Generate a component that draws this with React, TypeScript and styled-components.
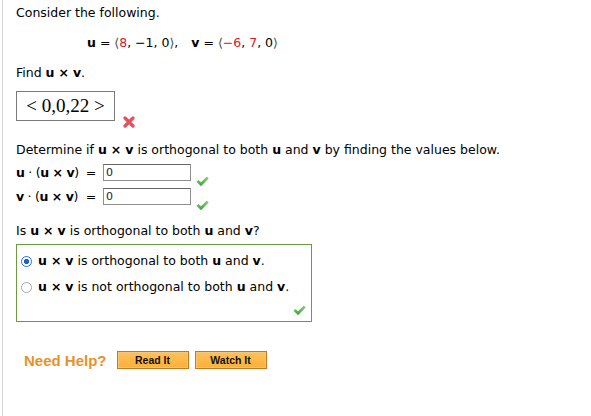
import React from "react";
import styled, { createGlobalStyle } from "styled-components";

const Global = createGlobalStyle`
  html, body { margin: 0; padding: 0; background: #fff; }
  body { font-family: "DejaVu Sans", Verdana, sans-serif; font-size: 12.5px; color: #000; }
`;

const Page = styled.div`
  width: 591px;
  height: 416px;
  box-sizing: border-box;
  border-left: 1px solid #d8d8d8;
  margin-left: 2px;
  padding: 5px 0 0 13px;
  display: flex;
  flex-direction: column;
`;

const Para = styled.div<{ $mt?: number }>`
  margin-top: ${(p) => p.$mt ?? 0}px;
  line-height: 16px;
  white-space: nowrap;
`;

const Eq = styled.div`
  margin-top: 14px;
  padding-left: 71px;
  line-height: 16px;
  white-space: nowrap;
  display: flex;
  gap: 13px;
`;

const Red = styled.span`
  color: #d0202a;
`;

const Ang = styled.span`
  color: #444;
`;

const AnswerRow = styled.div`
  margin-top: 10px;
  display: flex;
  align-items: flex-end;
  gap: 8px;
`;

const AnswerBox = styled.div`
  width: 97px;
  height: 28px;
  border: 1px solid #7a7a7a;
  box-sizing: content-box;
  font-family: "Liberation Serif", "Times New Roman", serif;
  font-size: 19px;
  display: flex;
  align-items: center;
  justify-content: center;
`;

const Icon = styled.span<{ $mb?: number }>`
  display: inline-flex;
  margin-bottom: ${(p) => p.$mb ?? 0}px;
`;

const CalcRow = styled.div<{ $mt: number }>`
  margin-top: ${(p) => p.$mt}px;
  display: flex;
  align-items: flex-start;
  line-height: 17px;
  white-space: nowrap;
`;

const CalcLabel = styled.span`
  flex: 0 0 87px;
  width: 87px;
  box-sizing: border-box;
  padding-right: 7px;
  display: flex;
  justify-content: space-between;
  letter-spacing: -0.3px;
`;

const Field = styled.div`
  flex: 0 0 auto;
  width: 84px;
  height: 15px;
  border: 1px solid #8e8e8e;
  border-top-color: #666;
  font-size: 11px;
  line-height: 15px;
  padding-left: 2px;
  color: #222;
`;

const CheckWrap = styled.span`
  display: inline-flex;
  margin: 12px 0 0 5px;
`;

const Choices = styled.div`
  margin-top: 5px;
  width: 290px;
  height: 68px;
  border: 1px solid #6f9a45;
  display: flex;
  flex-direction: column;
  padding: 8px 0 0 4px;
  box-sizing: content-box;
  position: relative;
`;

const Choice = styled.div<{ $mt?: number }>`
  display: flex;
  align-items: center;
  gap: 6px;
  line-height: 16px;
  margin-top: ${(p) => p.$mt ?? 0}px;
  white-space: nowrap;
`;

const Radio = styled.span<{ $on?: boolean }>`
  width: 11px;
  height: 11px;
  border-radius: 50%;
  box-sizing: border-box;
  border: 1px solid ${(p) => (p.$on ? "#2e6fd6" : "#a8a8a8")};
  background: ${(p) =>
    p.$on
      ? "radial-gradient(circle, #1e5fd0 0 2.4px, #fff 2.9px 100%)"
      : "#fff"};
`;

const BoxCheck = styled.span`
  position: absolute;
  right: 5px;
  bottom: 5px;
  display: inline-flex;
`;

const HelpRow = styled.div`
  margin-top: 29px;
  padding-left: 8px;
  display: flex;
  align-items: center;
`;

const HelpText = styled.span`
  font-family: "Liberation Sans", Arial, sans-serif;
  font-weight: bold;
  font-size: 15px;
  color: #e8912a;
  margin-right: 10px;
`;

const HelpButton = styled.button`
  width: 72px;
  height: 18px;
  margin-right: 6px;
  padding: 0;
  border: 1px solid #c27a22;
  box-shadow: inset 0 0 0 1px #f7c878;
  background: linear-gradient(#ffc15a, #fbb03a);
  font-family: "Liberation Sans", Arial, sans-serif;
  font-weight: bold;
  font-size: 10.5px;
  color: #111;
  display: flex;
  align-items: center;
  justify-content: center;
`;

const Check = () => (
  <svg width="13" height="11" viewBox="0 0 13 11">
    <defs>
      <linearGradient id="cg" x1="0" y1="0" x2="0" y2="1">
        <stop offset="0" stopColor="#8fd47e" />
        <stop offset="1" stopColor="#3f9a3c" />
      </linearGradient>
    </defs>
    <path d="M0.5 5.8 L2.6 3.9 L5 6.2 L10.8 0.5 L12.7 2.4 L5 10.3 Z" fill="url(#cg)" />
  </svg>
);

const Cross = () => (
  <svg width="12" height="12" viewBox="0 0 12 12">
    <path d="M2 2 L10 10 M10 2 L2 10" stroke="#e5505a" strokeWidth="3.2" strokeLinecap="round" />
  </svg>
);

const B = styled.b``;

export default function App() {
  return (
    <>
      <Global />
      <Page>
        <Para>Consider the following.</Para>
        <Eq>
          <span>
            <B>u</B> = <Ang>⟨</Ang><Red>8</Red>, −1, 0<Ang>⟩</Ang>,
          </span>
          <span>
            <B>v</B> = <Ang>⟨</Ang><Red>−6</Red>, <Red>7</Red>, 0<Ang>⟩</Ang>
          </span>
        </Eq>
        <Para $mt={14}>
          Find <B>u</B> <B>×</B> <B>v</B>.
        </Para>
        <AnswerRow>
          <AnswerBox>&lt; 0,0,22 &gt;</AnswerBox>
          <Icon $mb={-7}>
            <Cross />
          </Icon>
        </AnswerRow>
        <Para $mt={21}>
          Determine if <B>u</B> <B>×</B> <B>v</B> is orthogonal to both <B>u</B> and <B>v</B> by finding the values below.
        </Para>
        <CalcRow $mt={6}>
          <CalcLabel>
            <span>
              <B>u</B> · (<B>u</B> <B>×</B> <B>v</B>)
            </span>
            <span>=</span>
          </CalcLabel>
          <Field>0</Field>
          <CheckWrap>
            <Check />
          </CheckWrap>
        </CalcRow>
        <CalcRow $mt={1}>
          <CalcLabel>
            <span>
              <B>v</B> · (<B>u</B> <B>×</B> <B>v</B>)
            </span>
            <span>=</span>
          </CalcLabel>
          <Field>0</Field>
          <CheckWrap>
            <Check />
          </CheckWrap>
        </CalcRow>
        <Para $mt={12}>
          Is <B>u</B> <B>×</B> <B>v</B> is orthogonal to both <B>u</B> and <B>v</B>?
        </Para>
        <Choices>
          <Choice>
            <Radio $on />
            <span>
              <B>u</B> <B>×</B> <B>v</B> is orthogonal to both <B>u</B> and <B>v</B>.
            </span>
          </Choice>
          <Choice $mt={10}>
            <Radio />
            <span>
              <B>u</B> <B>×</B> <B>v</B> is not orthogonal to both <B>u</B> and <B>v</B>.
            </span>
          </Choice>
          <BoxCheck>
            <Check />
          </BoxCheck>
        </Choices>
        <HelpRow>
          <HelpText>Need Help?</HelpText>
          <HelpButton>Read It</HelpButton>
          <HelpButton>Watch It</HelpButton>
        </HelpRow>
      </Page>
    </>
  );
}
